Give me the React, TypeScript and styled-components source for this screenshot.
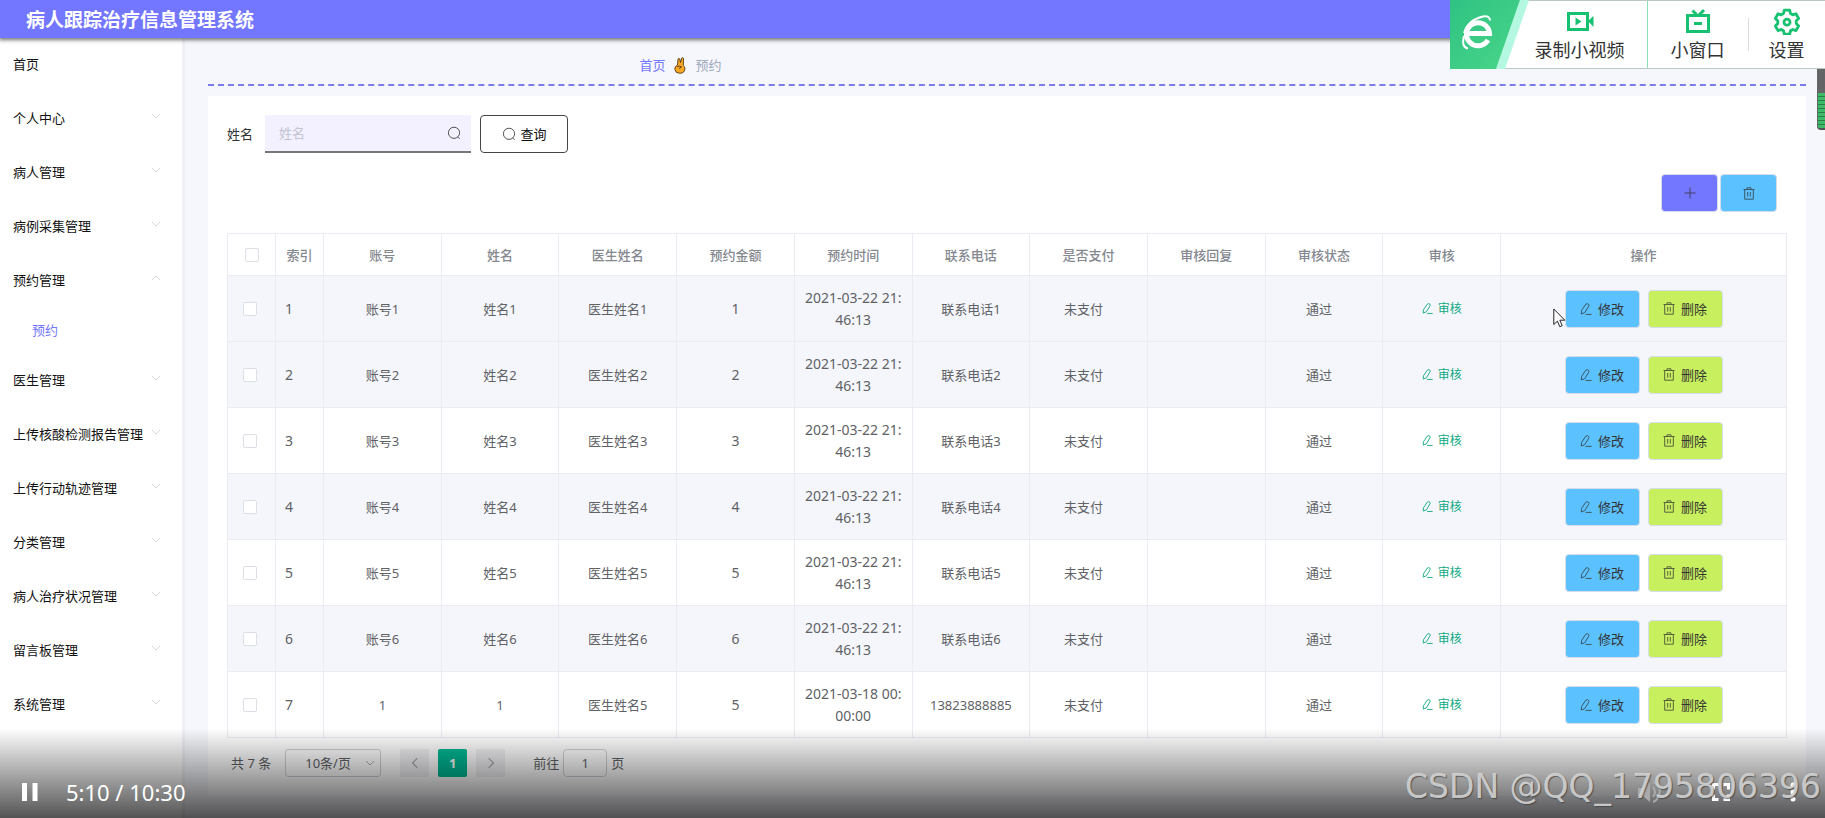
import React from "react";
import styled, { createGlobalStyle } from "styled-components";

const GlobalStyle = createGlobalStyle`
  * { box-sizing: border-box; }
  body {
    margin: 0;
    background: #f6f7fc;
    color: #606266;
    font: 13px/22px "Noto Sans", "Noto Sans CJK SC", sans-serif;
  }
  button, input, select { font: inherit; color: inherit; }
  button { cursor: pointer; }
  a { text-decoration: none; }
`;

const Page = styled.div`
  position: relative;
  min-height: 100vh;
  display: flex;
  flex-direction: column;
  overflow: hidden;
`;

const Header = styled.header`
  position: relative;
  height: 38px;
  padding: 2px 26px 0;
  display: flex;
  align-items: center;
  background: #7376ff;
  box-shadow: 0 1px 4px 1px rgba(0, 0, 0, 0.55);
`;

const Title = styled.h1`
  margin: 0;
  font-size: 19px;
  line-height: 36px;
  font-weight: 700;
  color: #fff;
`;

const Body = styled.div`
  flex: 1;
  display: flex;
`;

const Sidebar = styled.nav`
  flex: none;
  width: 185px;
  background: #fff;
  border-right: 3px solid #f0f0f5;
`;

const MenuItem = styled.a`
  height: 54px;
  padding: 0 21px 2px 13px;
  display: flex;
  align-items: center;
  justify-content: space-between;
  white-space: nowrap;
  color: #111;
  svg { margin-top: -4px; flex: none; }
`;

const SubItem = styled.a`
  height: 46px;
  padding: 0 0 2px 32px;
  display: flex;
  align-items: center;
  color: #7376ff;
`;

const Main = styled.main`
  flex: 1;
  min-width: 0;
  padding: 0 19px 23px 23px;
`;

const Breadcrumb = styled.nav`
  height: 48px;
  padding: 8px 0 0 27%;
  display: flex;
  align-items: center;
  gap: 9px;
  border-bottom: 2px dashed #7d7dea;
  color: #a0a9bb;
  a { color: #7376ff; }
`;

const Card = styled.section`
  margin-top: 10px;
  padding: 19px;
  background: #fff;
`;

const SearchForm = styled.form`
  display: flex;
  align-items: center;
  height: 38px;
  color: #333;
`;

const SearchBox = styled.div`
  width: 206px;
  height: 38px;
  margin: 0 9px 0 12px;
  padding: 0 10px 0 14px;
  display: flex;
  align-items: center;
  background: #f3f1ff;
  border-bottom: 2px solid #777;
  input {
    flex: 1;
    min-width: 0;
    padding: 0;
    border: 0;
    outline: 0;
    background: none;
  }
  input::placeholder { color: #c3c4cf; }
`;

const QueryButton = styled.button`
  width: 88px;
  height: 38px;
  padding: 0;
  display: flex;
  align-items: center;
  justify-content: center;
  gap: 5px;
  color: #111;
  background: #fff;
  border: 1px solid #444;
  border-radius: 4px;
`;

const Toolbar = styled.div`
  margin: 21px 10px 21px 0;
  display: flex;
  justify-content: flex-end;
  gap: 2px;
`;

const tones = { violet: "#7376ff", blue: "#5cc2ff", lime: "#c8f05e" };

const Action = styled.button<{ $tone: keyof typeof tones; $width: number }>`
  width: ${(p) => p.$width}px;
  height: 38px;
  padding: 0;
  display: inline-flex;
  align-items: center;
  justify-content: center;
  gap: 6px;
  color: #333;
  background: ${(p) => tones[p.$tone]};
  border: 1px solid #d5dcea;
  border-radius: 4px;
  svg { opacity: 0.75; }
`;

const Actions = styled.div`
  display: flex;
  justify-content: center;
  gap: 8px;
`;

const Table = styled.table`
  width: 100%;
  table-layout: fixed;
  border-collapse: collapse;
  text-align: center;
  th, td {
    border: 1px solid #ebecf3;
    padding: 0 9px;
    word-break: break-all;
  }
  th { height: 42px; color: #85888f; font-weight: 500; }
  td { height: 66px; }
`;

const Row = styled.tr<{ $shaded: boolean }>`
  background: ${(p) => (p.$shaded ? "#f5f6fb" : "#fff")};
`;

const NumberCell = styled.td<{ $left?: boolean }>`
  font-size: 14px;
  text-align: ${(p) => (p.$left ? "left" : "center")};
`;

const Check = styled.input`
  appearance: none;
  display: block;
  width: 14px;
  height: 14px;
  margin: 0 auto;
  background: #fff;
  border: 1px solid #dcdfe6;
  border-radius: 2px;
  td & { margin-left: 6px; }
`;

const Status = styled.span`
  margin-right: 10px;
`;

const ReviewButton = styled.button`
  margin: 0 auto;
  padding: 0;
  display: flex;
  align-items: center;
  gap: 5px;
  font-size: 12px;
  color: #11a983;
  background: none;
  border: 0;
`;

const Pagination = styled.div`
  margin: 11px 4px 0;
  height: 28px;
  display: flex;
  align-items: center;
`;

const SizeSelect = styled.div`
  position: relative;
  margin: 0 19px 0 14px;
  select {
    appearance: none;
    width: 96px;
    height: 28px;
    padding: 0 0 0 19px;
    background: #fff;
    border: 1px solid #d0d2da;
    border-radius: 3px;
  }
  svg { position: absolute; right: 6px; top: 9px; pointer-events: none; }
`;

const PageButton = styled.button<{ $active?: boolean }>`
  width: 29px;
  height: 28px;
  margin-right: 9px;
  padding: 0;
  display: flex;
  align-items: center;
  justify-content: center;
  font-weight: 700;
  color: ${(p) => (p.$active ? "#fff" : "#aaacb4")};
  background: ${(p) => (p.$active ? "#00b894" : "#f1f1f4")};
  border: 0;
  border-radius: 2px;
`;

const Jumper = styled.label`
  margin-left: 19px;
  display: flex;
  align-items: center;
  gap: 4px;
  input {
    width: 44px;
    height: 28px;
    padding: 0;
    text-align: center;
    background: #fff;
    border: 1px solid #d0d2da;
    border-radius: 4px;
  }
`;

const Recorder = styled.div`
  position: absolute;
  top: 0;
  right: 0;
  width: 375px;
  height: 69px;
  display: flex;
  background: #fff;
  border: 1px solid #b9c9c1;
  border-right: 0;
`;

const RecorderLogo = styled.svg`
  flex: none;
  margin: -1px -18px -1px -1px;
`;

const RecorderButton = styled.button<{ $width: number; $line?: string }>`
  flex: none;
  width: ${(p) => p.$width}px;
  padding: 6px 0 0;
  display: flex;
  flex-direction: column;
  align-items: center;
  gap: 2px;
  font-size: 18px;
  line-height: 26px;
  white-space: nowrap;
  color: #333;
  background: none;
  border: 0;
  border-right: 1px solid ${(p) => p.$line || "transparent"};
`;

const Divider = styled.span`
  align-self: center;
  flex: none;
  width: 1px;
  height: 33px;
  background: #ddd;
`;

const Meter = styled.div`
  position: absolute;
  top: 69px;
  right: 0;
  width: 8px;
  height: 61px;
  border-radius: 0 0 0 4px;
  border-left: 1px solid #666;
  border-bottom: 2px solid #555;
  background: linear-gradient(#646567 24px, transparent 24px),
    repeating-linear-gradient(#3dbb69 0 3px, #2b7d4a 3px 4px);
`;

const Pointer = styled.svg`
  position: absolute;
  left: -12px;
  top: 18px;
`;

const PointerHost = styled.div`
  position: relative;
  display: flex;
`;

const PlayerShade = styled.div`
  position: absolute;
  left: 0;
  right: 0;
  bottom: 0;
  height: 91px;
  padding: 51px 29px 0 20px;
  display: flex;
  align-items: flex-start;
  background: linear-gradient(rgba(0, 0, 0, 0), rgba(0, 0, 0, 0.68));
  color: #fff;
`;

const PlayerButton = styled.button<{ $gap?: number }>`
  height: 26px;
  margin: 0 ${(p) => p.$gap || 0}px 0 0;
  padding: 0;
  display: flex;
  align-items: center;
  background: none;
  border: 0;
`;

const PlayerTime = styled.span`
  flex: 1;
  font-size: 22px;
  line-height: 26px;
`;

const Watermark = styled.div`
  position: absolute;
  right: 4px;
  bottom: 10px;
  font: 400 33px/44px "DejaVu Sans", sans-serif;
  color: rgba(215, 215, 215, 0.9);
  text-shadow: 1px 1px 1px rgba(60, 60, 60, 0.7);
  white-space: nowrap;
`;

const Chevron = ({ dir = "down", color = "#d6d8de", size = 10 }: { dir?: "down" | "up" | "left" | "right"; color?: string; size?: number }) => {
  const d = {
    down: "M1 3l4 4 4-4",
    up: "M1 7l4-4 4 4",
    left: "M7 1L3 5l4 4",
    right: "M3 1l4 4-4 4",
  }[dir];
  return (
    <svg width={size} height={size} viewBox="0 0 10 10" fill="none" stroke={color} aria-hidden="true">
      <path d={d} />
    </svg>
  );
};

const SearchIcon = () => (
  <svg width="14" height="14" viewBox="0 0 14 14" fill="none" stroke="#555" aria-hidden="true">
    <circle cx="7" cy="6.8" r="5.6" />
    <path d="M10.6 10.8l2 2" />
  </svg>
);

const EditIcon = ({ size = 12 }: { size?: number }) => (
  <svg width={size} height={size} viewBox="0 0 12 12" fill="none" stroke="currentColor" aria-hidden="true">
    <path d="M5.800 1.200Q7.500 0 8.800 1.500 9.200 2.300 8.700 3.200L4.800 9.600 1.300 11l.3-3.600zM5.600 11.400h6" />
  </svg>
);

const TrashIcon = () => (
  <svg width="12" height="13" viewBox="0 0 12 13" fill="none" stroke="currentColor" aria-hidden="true">
    <path d="M.5 2.5h11M4 2.5V.8h4v1.7M1.7 2.5v9.7h8.6V2.5M4.7 5v4.6M7.3 5v4.6" />
  </svg>
);

const menu = ["个人中心", "病人管理", "病例采集管理", "预约管理", "医生管理", "上传核酸检测报告管理", "上传行动轨迹管理", "分类管理", "病人治疗状况管理", "留言板管理", "系统管理"];
const columns = ["账号", "姓名", "医生姓名", "预约金额", "预约时间", "联系电话", "是否支付", "审核回复", "审核状态", "审核"];

const rows = [
  ...[1, 2, 3, 4, 5, 6].map((n) => ({
    account: `账号${n}`, name: `姓名${n}`, doctor: `医生姓名${n}`, fee: n, time: "2021-03-22 21:46:13", phone: `联系电话${n}`,
  })),
  { account: "1", name: "1", doctor: "医生姓名5", fee: 5, time: "2021-03-18 00:00:00", phone: "13823888885" },
];

const MiddleCol = styled.col`
  width: 7.55%;
`;
const NarrowCol = styled.col`
  width: 48px;
`;

export default function App() {
  return (
    <Page>
      <GlobalStyle />
      <Header>
        <Title>病人跟踪治疗信息管理系统</Title>
      </Header>
      <Body>
        <Sidebar>
          <MenuItem href="#home">首页</MenuItem>
          {menu.map((label) => (
            <React.Fragment key={label}>
              <MenuItem href="#menu">
                {label}
                <Chevron dir={label === "预约管理" ? "up" : "down"} />
              </MenuItem>
              {label === "预约管理" && <SubItem href="#booking">预约</SubItem>}
            </React.Fragment>
          ))}
        </Sidebar>
        <Main>
          <Breadcrumb>
            <a href="#home">首页</a>
            <svg width="12" height="17" viewBox="0 0 12 17" stroke="#3a2a10" strokeWidth=".8" fill="#f9a825" aria-hidden="true">
              <path d="M3.5 8L4 2q.8-1.400 1.800 0L6.500 5.500 7.600 1.200q1.200-1.200 2 .2L9.300 8.500q2 1 1.600 3.500-.5 4.300-5 4.300T.8 12.500Q.3 9.500 3.500 8z" />
              <path d="M3 9.500q3-1 4.500.5L5 11.500" fill="none" />
            </svg>
            <span>预约</span>
          </Breadcrumb>
          <Card>
            <SearchForm onSubmit={(e) => e.preventDefault()}>
              <label htmlFor="name">姓名</label>
              <SearchBox>
                <input id="name" placeholder="姓名" />
                <SearchIcon />
              </SearchBox>
              <QueryButton type="submit">
                <SearchIcon />
                查询
              </QueryButton>
            </SearchForm>
            <Toolbar>
              <Action $tone="violet" $width={57} aria-label="新增">
                <svg width="12" height="12" viewBox="0 0 12 12" stroke="currentColor" aria-hidden="true">
                  <path d="M6 .5v11M.5 6h11" />
                </svg>
              </Action>
              <Action $tone="blue" $width={57} aria-label="批量删除">
                <TrashIcon />
              </Action>
            </Toolbar>
            <Table>
              <colgroup>
                <NarrowCol />
                <NarrowCol />
                {columns.map((c) => (
                  <MiddleCol key={c} />
                ))}
                <col />
              </colgroup>
              <thead>
                <tr>
                  <th><Check type="checkbox" aria-label="全选" /></th>
                  <th>索引</th>
                  {columns.map((c) => (
                    <th key={c}>{c}</th>
                  ))}
                  <th>操作</th>
                </tr>
              </thead>
              <tbody>
                {rows.map((r, i) => (
                  <Row key={i} $shaded={i === 0 || i % 2 === 1}>
                    <td><Check type="checkbox" aria-label={`选择第${i + 1}行`} /></td>
                    <NumberCell $left>{i + 1}</NumberCell>
                    <td>{r.account}</td>
                    <td>{r.name}</td>
                    <td>{r.doctor}</td>
                    <NumberCell>{r.fee}</NumberCell>
                    <NumberCell>{r.time}</NumberCell>
                    <td>{r.phone}</td>
                    <td><Status>未支付</Status></td>
                    <td />
                    <td><Status>通过</Status></td>
                    <td>
                      <ReviewButton><EditIcon size={11} />审核</ReviewButton>
                    </td>
                    <td>
                      <Actions>
                        <PointerHost>
                          <Action $tone="blue" $width={75}><EditIcon />修改</Action>
                          {i === 0 && (
                            <Pointer width="13" height="20" viewBox="0 0 13 20" fill="#fff" stroke="#222" aria-hidden="true">
                              <path d="M.8 1v15.500l3.600-3.400 2.400 5.600 2.400-1-2.400-5.500h5z" />
                            </Pointer>
                          )}
                        </PointerHost>
                        <Action $tone="lime" $width={75}><TrashIcon />删除</Action>
                      </Actions>
                    </td>
                  </Row>
                ))}
              </tbody>
            </Table>
            <Pagination>
              <span>共 7 条</span>
              <SizeSelect>
                <select aria-label="每页条数">
                  <option>10条/页</option>
                </select>
                <Chevron color="#aaacb4" />
              </SizeSelect>
              <PageButton aria-label="上一页"><Chevron dir="left" color="#a4a6ad" size={12} /></PageButton>
              <PageButton $active>1</PageButton>
              <PageButton aria-label="下一页"><Chevron dir="right" color="#a4a6ad" size={12} /></PageButton>
              <Jumper>
                前往
                <input defaultValue="1" />
                页
              </Jumper>
            </Pagination>
          </Card>
        </Main>
      </Body>

      <Recorder>
        <RecorderLogo width="80" height="69" viewBox="0 0 80 69" aria-hidden="true">
          <defs>
            <linearGradient id="leaf" x1="0" y1="0" x2="1" y2="1">
              <stop offset="0" stopColor="#2fc283" />
              <stop offset="1" stopColor="#4ad689" />
            </linearGradient>
          </defs>
          <path d="M70 0h9L55 69H46z" fill="#b4f8e2" />
          <path d="M0 0h70L46 69H0z" fill="url(#leaf)" />
          <path d="M17.500 33.500H39.500A11.500 11.500 0 1 0 38 40" fill="none" stroke="#fff" strokeWidth="5" />
          <path d="M14 33Q18 20 33 16.500q7-1 7 4" fill="none" stroke="#fff" strokeWidth="2" />
          <path d="M14 36q-3 11 4 12.500" fill="none" stroke="#fff" strokeWidth="2" />
        </RecorderLogo>
        <RecorderButton $width={136} $line="#8be0b4">
          <svg width="28" height="28" viewBox="0 0 28 28" fill="none" stroke="#16c172" strokeWidth="3" aria-hidden="true">
            <path d="M2.500 6.500h19v16h-19z" />
            <path d="M9.500 10.500l6 4-6 4zM22 14l5.500-5v11z" fill="#16c172" stroke="none" />
          </svg>
          录制小视频
        </RecorderButton>
        <RecorderButton $width={100}>
          <svg width="28" height="28" viewBox="0 0 28 28" fill="none" stroke="#16c172" strokeWidth="3" aria-hidden="true">
            <path d="M3.500 8.500h21v16h-21zM10 16.500h8M8.500 3.500l4 4M20 3l-5 5" />
          </svg>
          小窗口
        </RecorderButton>
        <Divider />
        <RecorderButton $width={76}>
          <svg width="28" height="28" viewBox="0 0 24 24" fill="none" stroke="#16c172" strokeWidth="2.400" strokeLinejoin="round" aria-hidden="true">
            <path d="M9.700 2.700h4.600l.7 2.900 1.900 1.100 2.800-.9 2.300 4-2.100 2v2.400l2.100 2-2.300 4-2.800-.9-1.900 1.100-.7 2.900H9.700L9 20.400l-1.900-1.100-2.800.9-2.300-4 2.100-2v-2.400l-2.100-2 2.300-4 2.800.9L9 5.600z" />
            <circle cx="12" cy="13" r="2.600" />
          </svg>
          设置
        </RecorderButton>
      </Recorder>
      <Meter />

      <PlayerShade>
        <PlayerButton $gap={26} aria-label="暂停">
          <svg width="20" height="20" viewBox="0 0 20 20" fill="#fff" aria-hidden="true">
            <path d="M2 1h5v18H2zM12.500 1h5v18h-5z" />
          </svg>
        </PlayerButton>
        <PlayerTime>5:10 / 10:30</PlayerTime>
        <PlayerButton $gap={50} aria-label="音量">
          <svg width="24" height="24" viewBox="0 0 24 24" fill="#aaa" aria-hidden="true">
            <path d="M1 8h5l7-6v20l-7-6H1z" />
            <path d="M16 7q4 5 0 10M16 2q9 3 6 13-2 6-6 7" fill="none" stroke="#aaa" strokeWidth="2" />
          </svg>
        </PlayerButton>
        <PlayerButton $gap={59} aria-label="全屏">
          <svg width="20" height="20" viewBox="0 0 20 20" fill="none" stroke="#fff" strokeWidth="3" aria-hidden="true">
            <path d="M2.500 7.500v-5h5M12.500 2.500h5v5M17.500 12.500v5h-5M7.500 17.500h-5v-5" />
          </svg>
        </PlayerButton>
        <PlayerButton aria-label="更多">
          <svg width="6" height="20" viewBox="0 0 6 20" fill="#fff" aria-hidden="true">
            <circle cx="3" cy="3" r="2.500" />
            <circle cx="3" cy="10" r="2.500" />
            <circle cx="3" cy="17" r="2.500" />
          </svg>
        </PlayerButton>
      </PlayerShade>
      <Watermark>CSDN @QQ_1795806396</Watermark>
    </Page>
  );
}
